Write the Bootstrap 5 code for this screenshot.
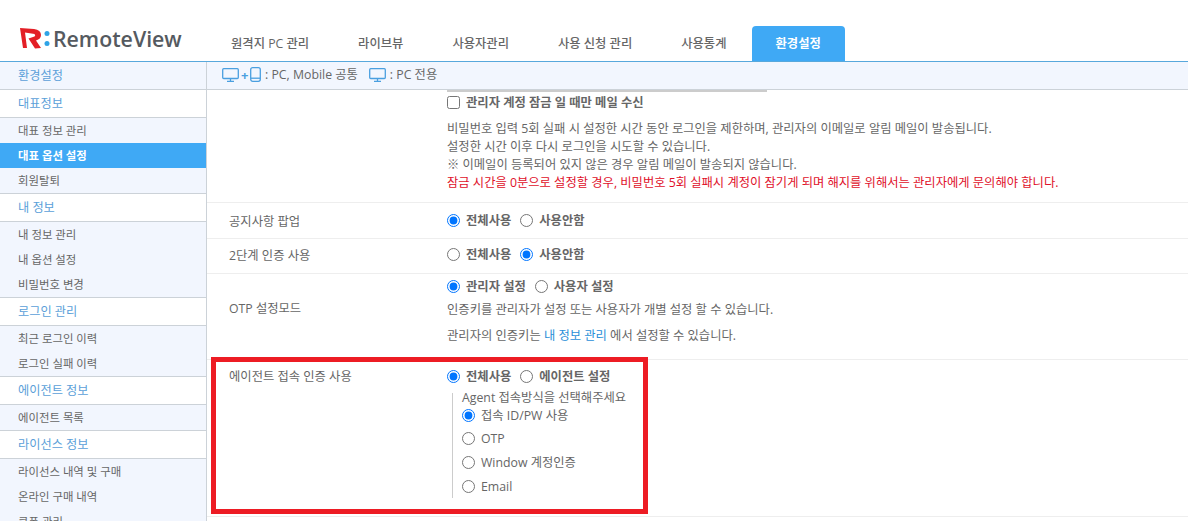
<!DOCTYPE html>
<html lang="ko">
<head>
<meta charset="utf-8">
<title>RemoteView</title>
<link href="https://cdn.jsdelivr.net/npm/bootstrap@5.3.0/dist/css/bootstrap.min.css" rel="stylesheet">
<style>
html,body{height:521px;overflow:hidden}
body{font-family:"Open Sans","Noto Sans CJK KR",sans-serif;font-size:12.3px;color:#666;background:#fff;position:relative}
.top-head{height:61px}
.logo-box{width:207px;padding:28px 0 0 20px;gap:4px}
.logo-word{font-family:"Open Sans",sans-serif;font-weight:600;font-size:21.3px;line-height:21px;color:#555a60;margin-left:-1px}
.main-tabs{padding-top:26px;gap:1px}
.main-tabs .nav-link{height:35px;padding:9px 24px 0;color:#666;font-size:12.3px;font-weight:500;line-height:17px;border-radius:4px 4px 0 0}
.main-tabs .nav-link.active{background:#3fa9f5;color:#fff;font-weight:700}
.body-wrap{height:460px;border-top:1px solid #58a8dc}
.side-col{width:207px;flex:none;border-right:1px solid #ccd2d8;background:#f2f6fe}
.side-head{height:28px;padding:0 18px;line-height:27px;background:#fff;color:#5b9fd9;border-bottom:1px solid #ccd2d8;font-size:12.2px}
.side-head.tint{background:#f2f6fe}
.side-items{margin:0;padding:0;list-style:none;border-bottom:1px solid #ccd2d8}
.side-items li{height:25px;line-height:25px;padding:0 18px;color:#666;font-size:11.4px}
.side-items li.on{background:#3fa9f5;color:#fff;font-weight:700}
.main-col{min-width:0}
.tool-bar{height:28px;background:#f2f6fe;border-bottom:1px solid #ccd2d8;padding:0 0 2px 15px;color:#666;line-height:24px}
.tool-bar svg{flex:none}
.plus-sign{color:#4a9fe0;font-weight:700;font-size:13px;line-height:14px;width:8px;margin:0 1px 0 2px}
.tool-text{margin-left:4px}
.tool-gap{margin-left:11px}
.clip-line{height:2px;width:320px;margin-left:240px;background:#ccc}
.set-row{display:flex;border-bottom:1px solid #eee}
.set-label{width:240px;flex:none;padding-left:22px;color:#666;line-height:18px}
.set-val{flex:1;min-width:0}
.choice{display:inline-flex;align-items:center;gap:6px;font-weight:700;color:#666;margin-right:9px;line-height:17px}
.choice input,.sub-choice input{width:13px;height:13px;margin:0;flex:none}
.note{line-height:18px;margin-top:6px}
.warn{color:#e0102a}
.blue-link{color:#2b8fd8;text-decoration:none}
.lock-row{height:111px;padding-top:2px}
.notice-row{height:36px;padding-top:2px}
.notice-val{padding-top:1px}
.two-row{height:35px}
.otp-row{height:86px}
.otp-label{padding-top:26px}
.otp-val{padding-top:4px}
.otp-line{line-height:18px;margin-top:3px}
.otp-line.second{margin-top:8px}
.agent-row{height:157px;padding-top:8px}
.sub-box{margin:5px 0 0 5px;padding-left:9px;border-left:1px solid #ccc}
.sub-title{line-height:10px}
.sub-choice{display:flex;align-items:center;gap:6px;height:23.7px;line-height:17px}
.red-frame{position:absolute;left:211px;top:357px;width:437px;height:157px;border:5px solid #ed1c24;pointer-events:none}
</style>
</head>
<body>
<header class="top-head d-flex">
  <div class="logo-box d-flex align-items-start">
    <svg width="30" height="21" viewBox="0 0 30 21" aria-label="logo">
      <path fill="#e31f26" d="M0 0 L14 1 Q21 2 21 7 Q21 11 16 12.5 L21 20 L15 20.500 L8.500 10.500 L14.500 8.500 Q16 7.500 14.500 6 L5 4.500 L7 20 L3 20 Z"/>
      <circle cx="27" cy="5.500" r="2.500" fill="#2fa3e6"/>
      <circle cx="27" cy="15.500" r="2.500" fill="#2fa3e6"/>
    </svg>
    <span class="logo-word">RemoteView</span>
  </div>
  <ul class="nav main-tabs">
    <li class="nav-item"><a class="nav-link" href="#">원격지 PC 관리</a></li>
    <li class="nav-item"><a class="nav-link" href="#">라이브뷰</a></li>
    <li class="nav-item"><a class="nav-link" href="#">사용자관리</a></li>
    <li class="nav-item"><a class="nav-link" href="#">사용 신청 관리</a></li>
    <li class="nav-item"><a class="nav-link" href="#">사용통계</a></li>
    <li class="nav-item"><a class="nav-link active" href="#">환경설정</a></li>
  </ul>
</header>
<div class="body-wrap d-flex">
  <aside class="side-col">
    <div class="side-head tint">환경설정</div>
    <div class="side-head">대표정보</div>
    <ul class="side-items"><li>대표 정보 관리</li><li class="on">대표 옵션 설정</li><li>회원탈퇴</li></ul>
    <div class="side-head">내 정보</div>
    <ul class="side-items"><li>내 정보 관리</li><li>내 옵션 설정</li><li>비밀번호 변경</li></ul>
    <div class="side-head">로그인 관리</div>
    <ul class="side-items"><li>최근 로그인 이력</li><li>로그인 실패 이력</li></ul>
    <div class="side-head">에이전트 정보</div>
    <ul class="side-items"><li>에이전트 목록</li></ul>
    <div class="side-head">라이선스 정보</div>
    <ul class="side-items"><li>라이선스 내역 및 구매</li><li>온라인 구매 내역</li><li>쿠폰 관리</li></ul>
  </aside>
  <main class="main-col flex-grow-1">
    <div class="tool-bar d-flex align-items-center">
      <svg width="17" height="14" viewBox="0 0 17 14" fill="none" stroke="#4a9fe0" stroke-width="1.300"><rect x=".7" y=".7" width="15.600" height="9.800" rx="1"/><path d="M8.500 10.500V13M5 13.300h7"/></svg>
      <span class="plus-sign">+</span>
      <svg width="11" height="15" viewBox="0 0 11 15" fill="none" stroke="#4a9fe0" stroke-width="1.300"><rect x=".7" y=".7" width="9.600" height="13.600" rx="2"/><path d="M1 11.200h9"/></svg>
      <span class="tool-text">: PC, Mobile 공통</span>
      <svg class="tool-gap" width="17" height="14" viewBox="0 0 17 14" fill="none" stroke="#4a9fe0" stroke-width="1.300"><rect x=".7" y=".7" width="15.600" height="9.800" rx="1"/><path d="M8.500 10.500V13M5 13.300h7"/></svg>
      <span class="tool-text">: PC 전용</span>
    </div>
    <div class="clip-line"></div>
    <div class="set-row lock-row">
      <div class="set-label"></div>
      <div class="set-val">
        <label class="choice"><input type="checkbox">관리자 계정 잠금 일 때만 메일 수신</label>
        <div class="note">비밀번호 입력 5회 실패 시 설정한 시간 동안 로그인을 제한하며, 관리자의 이메일로 알림 메일이 발송됩니다.<br>설정한 시간 이후 다시 로그인을 시도할 수 있습니다.<br>※ 이메일이 등록되어 있지 않은 경우 알림 메일이 발송되지 않습니다.<br><span class="warn">잠금 시간을 0분으로 설정할 경우, 비밀번호 5회 실패시 계정이 잠기게 되며 해지를 위해서는 관리자에게 문의해야 합니다.</span></div>
      </div>
    </div>
    <div class="set-row notice-row align-items-center">
      <div class="set-label">공지사항 팝업</div>
      <div class="set-val notice-val"><label class="choice"><input type="radio" name="a" checked>전체사용</label><label class="choice"><input type="radio" name="a">사용안함</label></div>
    </div>
    <div class="set-row two-row align-items-center">
      <div class="set-label">2단계 인증 사용</div>
      <div class="set-val"><label class="choice"><input type="radio" name="b">전체사용</label><label class="choice"><input type="radio" name="b" checked>사용안함</label></div>
    </div>
    <div class="set-row otp-row">
      <div class="set-label otp-label">OTP 설정모드</div>
      <div class="set-val otp-val">
        <label class="choice"><input type="radio" name="c" checked>관리자 설정</label><label class="choice"><input type="radio" name="c">사용자 설정</label>
        <div class="otp-line">인증키를 관리자가 설정 또는 사용자가 개별 설정 할 수 있습니다.</div>
        <div class="otp-line second">관리자의 인증키는 <a class="blue-link" href="#">내 정보 관리</a> 에서 설정할 수 있습니다.</div>
      </div>
    </div>
    <div class="set-row agent-row">
      <div class="set-label">에이전트 접속 인증 사용</div>
      <div class="set-val">
        <label class="choice"><input type="radio" name="d" checked>전체사용</label><label class="choice"><input type="radio" name="d">에이전트 설정</label>
        <div class="sub-box">
          <div class="sub-title">Agent 접속방식을 선택해주세요</div>
          <label class="sub-choice"><input type="radio" name="e" checked>접속 ID/PW 사용</label>
          <label class="sub-choice"><input type="radio" name="e">OTP</label>
          <label class="sub-choice"><input type="radio" name="e">Window 계정인증</label>
          <label class="sub-choice"><input type="radio" name="e">Email</label>
        </div>
      </div>
    </div>
  </main>
</div>
<div class="red-frame"></div>
<script src="https://cdn.jsdelivr.net/npm/bootstrap@5.3.0/dist/js/bootstrap.bundle.min.js"></script>
</body>
</html>
